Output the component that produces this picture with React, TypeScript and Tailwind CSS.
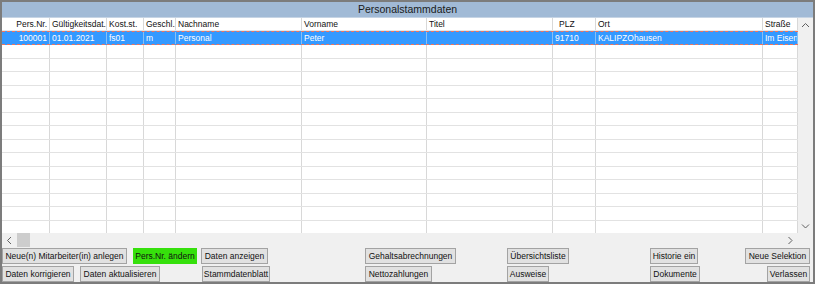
import React from "react";

const cols = [
  { key: "nr", label: "Pers.Nr.", w: 48, align: "right" },
  { key: "gd", label: "Gültigkeitsdat.", w: 57, align: "left" },
  { key: "ks", label: "Kost.st.", w: 37, align: "left" },
  { key: "gs", label: "Geschl.", w: 32, align: "left" },
  { key: "nn", label: "Nachname", w: 126, align: "left" },
  { key: "vn", label: "Vorname", w: 125, align: "left" },
  { key: "ti", label: "Titel", w: 126, align: "left" },
  { key: "plz", label: "PLZ", w: 43, align: "left" },
  { key: "ort", label: "Ort", w: 167, align: "left" },
  { key: "str", label: "Straße", w: 35, align: "left" },
];

const row: Record<string, string> = {
  nr: "100001",
  gd: "01.01.2021",
  ks: "fs01",
  gs: "m",
  nn: "Personal",
  vn: "Peter",
  ti: "",
  plz: "91710",
  ort: "KALIPZOhausen",
  str: "Im Eisen",
};

const Chevron = ({ dir }: { dir: "up" | "down" | "left" | "right" }) => {
  const pts = {
    up: "1,5 4.5,1.5 8,5",
    down: "1,1.5 4.5,5 8,1.5",
    left: "5,1 1.5,4.5 5,8",
    right: "1.5,1 5,4.5 1.5,8",
  }[dir];
  const vertical = dir === "up" || dir === "down";
  return (
    <svg width={vertical ? 9 : 7} height={vertical ? 7 : 9} viewBox={vertical ? "0 0 9 7" : "0 0 7 9"}>
      <polyline points={pts} fill="none" stroke="#606060" strokeWidth="1" />
    </svg>
  );
};

const Btn = ({ label, w, ml, green }: { label: string; w: number; ml: number; green?: boolean }) => (
  <div
    className={`h-[16px] flex items-center justify-center shrink-0 border whitespace-nowrap overflow-hidden ${
      green ? "bg-[#36e00c] border-[#36e00c]" : "bg-[#e1e1e1] border-[#a3a3a3]"
    }`}
    style={{ width: w, marginLeft: ml }}
  >
    {label}
  </div>
);

export default function App() {
  const emptyRows = Array.from({ length: 14 });
  return (
    <div
      className="w-[815px] h-[284px] bg-[#f0f0f0] border-t-2 border-l-2 border-r-2 border-b-2 border-[#7c7c7c] flex flex-col overflow-hidden text-[8.5px] text-[#111]"
      style={{ fontFamily: '"Liberation Sans", Arial, sans-serif' }}
    >
      <div className="h-[16px] shrink-0 bg-[#a1bad6] border-b border-[#c6d4e4] flex items-center justify-center text-[10.5px] text-[#1a1a1a]">
        Personalstammdaten
      </div>

      <div className="flex h-[215px] shrink-0 bg-white">
        <div className="w-[796px] flex flex-col overflow-hidden">
          <div className="flex h-[13px] shrink-0 border-b border-[#e6e6e6]">
            {cols.map((c) => (
              <div
                key={c.key}
                className={`shrink-0 border-r border-[#d8d8d8] px-[2px] leading-[13px] whitespace-nowrap overflow-hidden ${
                  c.align === "right" ? "text-right" : c.key === "plz" ? "pl-[6px]" : ""
                }`}
                style={{ width: c.w }}
              >
                {c.label}
              </div>
            ))}
          </div>
          <div className="flex h-[14px] shrink-0 bg-[#3399ff] text-white border-y border-dashed border-[#f2735a]">
            {cols.map((c) => (
              <div
                key={c.key}
                className={`shrink-0 border-r border-[#86bff5] px-[2px] leading-[12px] whitespace-nowrap overflow-hidden ${
                  c.align === "right" ? "text-right" : ""
                }`}
                style={{ width: c.w }}
              >
                {row[c.key]}
              </div>
            ))}
          </div>
          {emptyRows.map((_, i) => (
            <div key={i} className="flex h-[13.5px] shrink-0 border-b border-[#e2e2e2]">
              {cols.map((c) => (
                <div key={c.key} className="shrink-0 border-r border-[#d8d8d8]" style={{ width: c.w }} />
              ))}
            </div>
          ))}
        </div>
        <div className="w-[15px] shrink-0 bg-[#f0f0f0] flex flex-col justify-between">
          <div className="h-[14px] flex items-center justify-center">
            <Chevron dir="up" />
          </div>
          <div className="h-[14px] flex items-center justify-center">
            <Chevron dir="down" />
          </div>
        </div>
      </div>

      <div className="flex h-[14px] shrink-0">
        <div className="w-[796px] flex bg-[#f0f0f0]">
          <div className="w-[15px] flex items-center justify-center">
            <Chevron dir="left" />
          </div>
          <div className="w-[13px] bg-[#cdcdcd]" />
          <div className="flex-1" />
          <div className="w-[15px] flex items-center justify-center">
            <Chevron dir="right" />
          </div>
        </div>
        <div className="w-[15px] bg-[#f0f0f0]" />
      </div>

      <div className="flex flex-col gap-[2px] pt-[1px]">
        <div className="flex">
          <Btn label="Neue(n) Mitarbeiter(in) anlegen" w={125} ml={0} />
          <Btn label="Pers.Nr. ändern" w={64} ml={6} green />
          <Btn label="Daten anzeigen" w={67} ml={4} />
          <Btn label="Gehaltsabrechnungen" w={91} ml={97} />
          <Btn label="Übersichtsliste" w={62} ml={51} />
          <Btn label="Historie ein" w={48} ml={81} />
          <Btn label="Neue Selektion" w={65} ml={47} />
        </div>
        <div className="flex">
          <Btn label="Daten korrigieren" w={72} ml={0} />
          <Btn label="Daten aktualisieren" w={80} ml={6} />
          <Btn label="Stammdatenblatt" w={68} ml={42} />
          <Btn label="Nettozahlungen" w={67} ml={95} />
          <Btn label="Ausweise" w={42} ml={75} />
          <Btn label="Dokumente" w={50} ml={101} />
          <Btn label="Verlassen" w={43} ml={67} />
        </div>
      </div>
    </div>
  );
}
